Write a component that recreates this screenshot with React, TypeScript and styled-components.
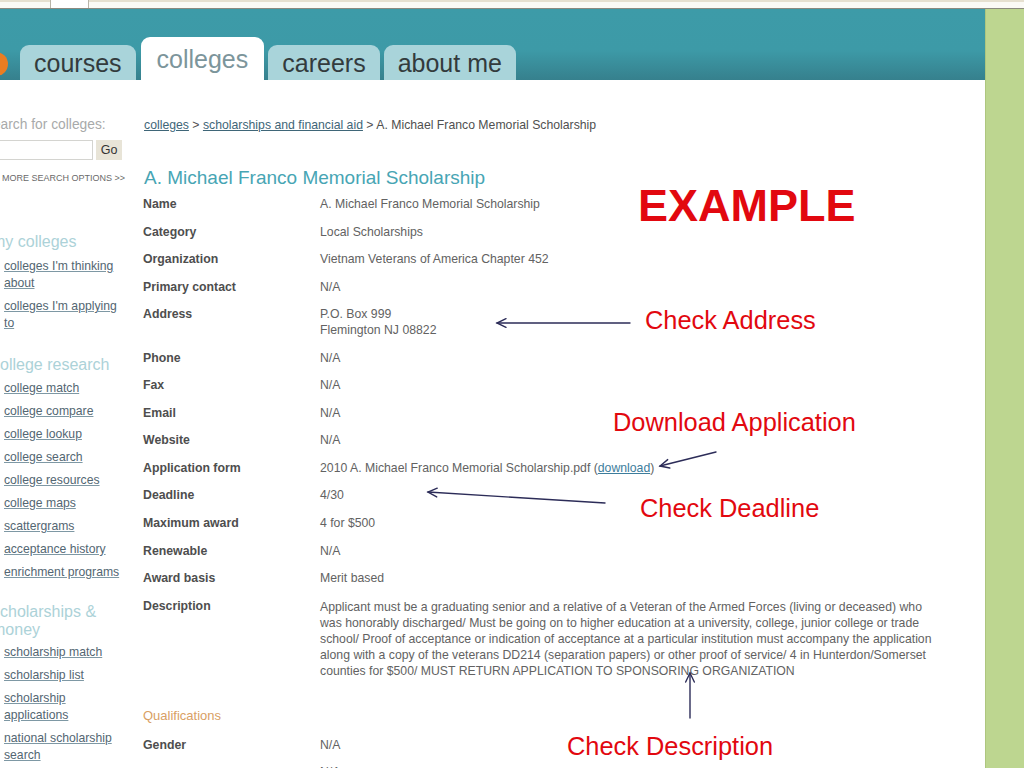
import React from "react";
import styled, { createGlobalStyle } from "styled-components";

const GlobalStyle = createGlobalStyle`
  html, body {
    margin: 0;
    padding: 0;
    background: #ffffff;
    overflow: hidden;
  }
  body {
    font-family: "Liberation Sans", Arial, sans-serif;
  }
`;

const Page = styled.div`
  position: relative;
  width: 1024px;
  height: 768px;
  overflow: hidden;
  display: flex;
  flex-direction: column;
  background: #ffffff;
`;

/* browser chrome strip along the top */
const Chrome = styled.div`
  height: 8px;
  flex: none;
  display: flex;
  background: linear-gradient(#e6e0d0 0, #e6e0d0 2px, #fbfaf6 2px);
  border-bottom: 1px solid #8c8a80;
`;

const AddressField = styled.div`
  margin-left: 50px;
  width: 37px;
  border-left: 1px solid #b8b4a8;
  border-right: 1px solid #b8b4a8;
  background: #ffffff;
`;

const Stage = styled.div`
  flex: 1;
  display: flex;
  min-height: 0;
`;

const Site = styled.div`
  width: 985px;
  flex: none;
  display: flex;
  flex-direction: column;
  overflow: hidden;
`;

const Rail = styled.div`
  flex: 1;
  background: #bdd690;
  border-left: 1px solid #aec67f;
`;

/* ---------- header with tabs ---------- */

const Header = styled.header`
  height: 71px;
  flex: none;
  display: flex;
  align-items: flex-end;
  background: linear-gradient(#3d9ba8 0, #3d9aa7 58%, #36808d 100%);
`;

const Logo = styled.div`
  width: 24px;
  height: 24px;
  border-radius: 50%;
  background: #ea7d22;
  margin-left: -16px;
  margin-right: 12px;
  margin-bottom: 4px;
  flex: none;
`;

const TabList = styled.nav`
  display: flex;
  align-items: flex-end;
  gap: 4px;
`;

const Tab = styled.div<{ $active?: boolean }>`
  height: ${(p) => (p.$active ? 43 : 35)}px;
  padding: 0 ${(p) => (p.$active ? 16 : 14)}px;
  box-sizing: border-box;
  border-radius: 9px 9px 0 0;
  background: ${(p) => (p.$active ? "#ffffff" : "#a9d4da")};
  color: ${(p) => (p.$active ? "#7c959b" : "#333b3d")};
  font-size: 25px;
  line-height: 28px;
  padding-top: ${(p) => (p.$active ? 8 : 4)}px;
  white-space: nowrap;
  &:first-child {
    margin-right: 1px;
  }
`;

/* ---------- body ---------- */

const Body = styled.div`
  display: flex;
  align-items: flex-start;
`;

const Sidebar = styled.aside`
  width: 155px;
  margin-left: -12px;
  flex: none;
  display: flex;
  flex-direction: column;
`;

const SearchLabel = styled.div`
  margin-top: 37px;
  font-size: 13.8px;
  line-height: 16px;
  color: #a8aaaa;
  margin-left: -2px;
`;

const SearchRow = styled.div`
  margin-top: 7px;
  display: flex;
  gap: 3px;
`;

const SearchInput = styled.div`
  width: 105px;
  height: 20px;
  box-sizing: border-box;
  border: 1px solid #d4d4d0;
  background: #ffffff;
`;

const GoButton = styled.div`
  width: 26px;
  height: 20px;
  background: #e8e4d7;
  color: #333;
  font-size: 12.5px;
  line-height: 20px;
  text-align: center;
`;

const MoreOptions = styled.div`
  margin-top: 13px;
  padding-left: 14px;
  font-size: 9px;
  line-height: 11px;
  color: #6a6a6a;
  white-space: nowrap;
`;

const NavHeading = styled.div<{ $gap: number }>`
  margin-top: ${(p) => p.$gap}px;
  padding-left: 4px;
  font-size: 16px;
  line-height: 18px;
  color: #acd2d8;
`;

const NavList = styled.ul<{ $gap: number }>`
  list-style: none;
  margin: ${(p) => p.$gap}px 0 0;
  padding: 0 0 0 16px;
  display: flex;
  flex-direction: column;
  gap: 6px;
`;

const NavLink = styled.a`
  font-size: 12.2px;
  line-height: 17px;
  color: #536672;
  text-decoration: underline;
  text-decoration-color: #7e98a4;
  display: block;
  width: 118px;
`;

const Content = styled.main`
  flex: 1;
  display: flex;
  flex-direction: column;
  padding-right: 30px;
`;

const Crumbs = styled.div`
  margin-top: 37.5px;
  padding-left: 1px;
  font-size: 12.25px;
  line-height: 15px;
  color: #505050;
  white-space: nowrap;
`;

const CrumbLink = styled.a`
  color: #3f6678;
  text-decoration: underline;
`;

const Title = styled.h1`
  margin: 34.5px 0 0 1px;
  font-size: 19px;
  line-height: 22px;
  font-weight: normal;
  color: #47a5b4;
`;

const Details = styled.div<{ $top?: number }>`
  margin-top: ${(p) => p.$top ?? 0}px;
`;

const Row = styled.div`
  display: grid;
  grid-template-columns: 177px 1fr;
  padding: 5.95px 0;
  line-height: 15.7px;
`;

const Label = styled.div`
  font-size: 12.3px;
  font-weight: bold;
  color: #4e4e4e;
`;

const Value = styled.div<{ $lh?: number }>`
  font-size: 12.25px;
  color: #626262;
  line-height: ${(p) => p.$lh ?? 15.7}px;
`;

const DownloadLink = styled.a`
  color: #3d7d9c;
  text-decoration: underline;
`;

const Section = styled.div`
  margin-top: 23px;
  margin-bottom: 8px;
  font-size: 13px;
  line-height: 16px;
  color: #d9a064;
`;

/* ---------- callouts laid over the page ---------- */

const Callout = styled.div<{ $x: number; $y: number; $big?: boolean }>`
  position: absolute;
  left: ${(p) => p.$x}px;
  top: ${(p) => p.$y}px;
  font-family: "Liberation Sans", Arial, sans-serif;
  font-size: ${(p) => (p.$big ? 45 : 25.4)}px;
  font-weight: ${(p) => (p.$big ? "bold" : "normal")};
  line-height: 1;
  color: #e2080f;
  white-space: nowrap;
`;

const Arrows = styled.svg`
  position: absolute;
  left: 0;
  top: 0;
  pointer-events: none;
`;

type Arrow = { x1: number; y1: number; x2: number; y2: number };

function ArrowLine({ x1, y1, x2, y2 }: Arrow) {
  const a = Math.atan2(y2 - y1, x2 - x1);
  const len = 10;
  const spread = 0.45;
  const h1x = x2 - len * Math.cos(a - spread);
  const h1y = y2 - len * Math.sin(a - spread);
  const h2x = x2 - len * Math.cos(a + spread);
  const h2y = y2 - len * Math.sin(a + spread);
  return (
    <g stroke="#2c2c58" strokeWidth={1.4} fill="none" strokeLinecap="round">
      <line x1={x1} y1={y1} x2={x2} y2={y2} />
      <polyline points={`${h1x},${h1y} ${x2},${y2} ${h2x},${h2y}`} />
    </g>
  );
}

const arrows: Arrow[] = [
  { x1: 630, y1: 323, x2: 497, y2: 323 },
  { x1: 716, y1: 452, x2: 660, y2: 466 },
  { x1: 605, y1: 503, x2: 428, y2: 492 },
  { x1: 690, y1: 718, x2: 690, y2: 673 },
];

const details: [string, React.ReactNode][] = [
  ["Name", "A. Michael Franco Memorial Scholarship"],
  ["Category", "Local Scholarships"],
  ["Organization", "Vietnam Veterans of America Chapter 452"],
  ["Primary contact", "N/A"],
  [
    "Address",
    <>
      P.O. Box 999
      <br />
      Flemington NJ 08822
    </>,
  ],
  ["Phone", "N/A"],
  ["Fax", "N/A"],
  ["Email", "N/A"],
  ["Website", "N/A"],
  [
    "Application form",
    <>
      2010 A. Michael Franco Memorial Scholarship.pdf (
      <DownloadLink href="#">download</DownloadLink>)
    </>,
  ],
  ["Deadline", "4/30"],
  ["Maximum award", "4 for $500"],
  ["Renewable", "N/A"],
  ["Award basis", "Merit based"],
];

const description = [
  "Applicant must be a graduating senior and a relative of a Veteran of the Armed Forces (living or deceased) who",
  "was honorably discharged/ Must be going on to higher education at a university, college, junior college or trade",
  "school/ Proof of acceptance or indication of acceptance at a particular institution must accompany the application",
  "along with a copy of the veterans DD214 (separation papers) or other proof of service/ 4 in Hunterdon/Somerset",
  "counties for $500/ MUST RETURN APPLICATION TO SPONSORING ORGANIZATION",
];

const myColleges = [
  <>colleges I'm thinking about</>,
  <>colleges I'm applying to</>,
];

const research = [
  "college match",
  "college compare",
  "college lookup",
  "college search",
  "college resources",
  "college maps",
  "scattergrams",
  "acceptance history",
  "enrichment programs",
];

const money = [
  "scholarship match",
  "scholarship list",
  "scholarship applications",
  "national scholarship search",
];

export default function App() {
  return (
    <>
      <GlobalStyle />
      <Page>
        <Chrome>
          <AddressField />
        </Chrome>
        <Stage>
          <Site>
            <Header>
              <Logo />
              <TabList>
                <Tab>courses</Tab>
                <Tab $active>colleges</Tab>
                <Tab>careers</Tab>
                <Tab>about me</Tab>
              </TabList>
            </Header>
            <Body>
              <Sidebar>
                <SearchLabel>search for colleges:</SearchLabel>
                <SearchRow>
                  <SearchInput />
                  <GoButton>Go</GoButton>
                </SearchRow>
                <MoreOptions>MORE SEARCH OPTIONS &gt;&gt;</MoreOptions>

                <NavHeading $gap={49}>my colleges</NavHeading>
                <NavList $gap={7}>
                  {myColleges.map((t, i) => (
                    <li key={i}>
                      <NavLink href="#">{t}</NavLink>
                    </li>
                  ))}
                </NavList>

                <NavHeading $gap={24}>college research</NavHeading>
                <NavList $gap={6}>
                  {research.map((t) => (
                    <li key={t}>
                      <NavLink href="#">{t}</NavLink>
                    </li>
                  ))}
                </NavList>

                <NavHeading $gap={22}>
                  scholarships &amp;
                  <br />
                  money
                </NavHeading>
                <NavList $gap={5}>
                  {money.map((t) => (
                    <li key={t}>
                      <NavLink href="#">{t}</NavLink>
                    </li>
                  ))}
                </NavList>
              </Sidebar>

              <Content>
                <Crumbs>
                  <CrumbLink href="#">colleges</CrumbLink> &gt;{" "}
                  <CrumbLink href="#">scholarships and financial aid</CrumbLink> &gt; A. Michael
                  Franco Memorial Scholarship
                </Crumbs>
                <Title>A. Michael Franco Memorial Scholarship</Title>
                <Details $top={2}>
                  {details.map(([k, v]) => (
                    <Row key={k}>
                      <Label>{k}</Label>
                      <Value>{v}</Value>
                    </Row>
                  ))}
                  <Row>
                    <Label>Description</Label>
                    <Value $lh={16}>
                      {description.map((line, i) => (
                        <React.Fragment key={i}>
                          {line}
                          {i < description.length - 1 && <br />}
                        </React.Fragment>
                      ))}
                    </Value>
                  </Row>
                </Details>
                <Section>Qualifications</Section>
                <Details>
                  <Row>
                    <Label>Gender</Label>
                    <Value>N/A</Value>
                  </Row>
                  <Row>
                    <Label />
                    <Value>N/A</Value>
                  </Row>
                </Details>
              </Content>
            </Body>
          </Site>
          <Rail />
        </Stage>

        <Arrows width={1024} height={768} viewBox="0 0 1024 768">
          {arrows.map((a, i) => (
            <ArrowLine key={i} {...a} />
          ))}
        </Arrows>
        <Callout $x={638} $y={183} $big>
          EXAMPLE
        </Callout>
        <Callout $x={645} $y={308}>
          Check Address
        </Callout>
        <Callout $x={613} $y={410}>
          Download Application
        </Callout>
        <Callout $x={640} $y={496}>
          Check Deadline
        </Callout>
        <Callout $x={567} $y={734}>
          Check Description
        </Callout>
      </Page>
    </>
  );
}
